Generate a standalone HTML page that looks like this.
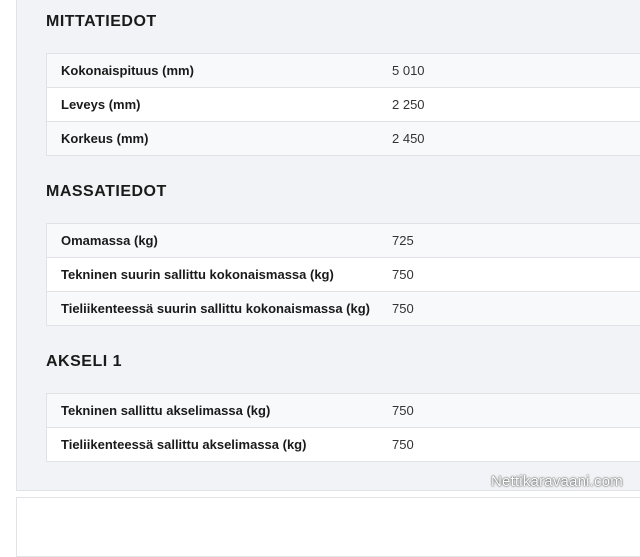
<!DOCTYPE html>
<html><head><meta charset="utf-8"><style>
*{margin:0;padding:0;box-sizing:border-box}
body{width:640px;height:508px;overflow:hidden;background:#fff;font-family:"Liberation Sans",sans-serif;position:relative}
.panel{position:absolute;left:16px;top:-2px;width:640px;height:493px;background:#f2f3f6;border:1px solid #e1e3e7}
.box2{position:absolute;left:16px;top:497px;width:640px;height:60px;background:#fff;border:1px solid #e1e3e7}
h2{position:absolute;left:46px;font-size:16px;font-weight:bold;color:#1a1a1a;letter-spacing:0.5px}
.t{position:absolute;left:46px;width:620px;border:1px solid #e0e2e6;border-bottom:none}
.r{height:34px;border-bottom:1px solid #e0e2e6;background:#f8f9fa;position:relative;font-size:13px;line-height:33px}
.r.w{background:#fff}
.r b{position:absolute;left:14px;color:#1a1a1a}
.r span{position:absolute;left:345px;color:#333}
.wm{position:absolute;left:491px;top:473px;font-size:15px;color:#fff;text-shadow:0 0 2px #555,0 0 1px #333;letter-spacing:0.2px}
</style></head><body>
<div class="panel"></div>
<div class="box2"></div>
<h2 style="top:13px">MITTATIEDOT</h2>
<div class="t" style="top:53px">
<div class="r"><b>Kokonaispituus (mm)</b><span>5 010</span></div>
<div class="r w"><b>Leveys (mm)</b><span>2 250</span></div>
<div class="r"><b>Korkeus (mm)</b><span>2 450</span></div>
</div>
<h2 style="top:183px">MASSATIEDOT</h2>
<div class="t" style="top:223px">
<div class="r"><b>Omamassa (kg)</b><span>725</span></div>
<div class="r w"><b>Tekninen suurin sallittu kokonaismassa (kg)</b><span>750</span></div>
<div class="r"><b>Tieliikenteessä suurin sallittu kokonaismassa (kg)</b><span>750</span></div>
</div>
<h2 style="top:353px">AKSELI 1</h2>
<div class="t" style="top:393px">
<div class="r"><b>Tekninen sallittu akselimassa (kg)</b><span>750</span></div>
<div class="r w"><b>Tieliikenteessä sallittu akselimassa (kg)</b><span>750</span></div>
</div>
<div class="wm">Nettikaravaani.com</div>
</body></html>
